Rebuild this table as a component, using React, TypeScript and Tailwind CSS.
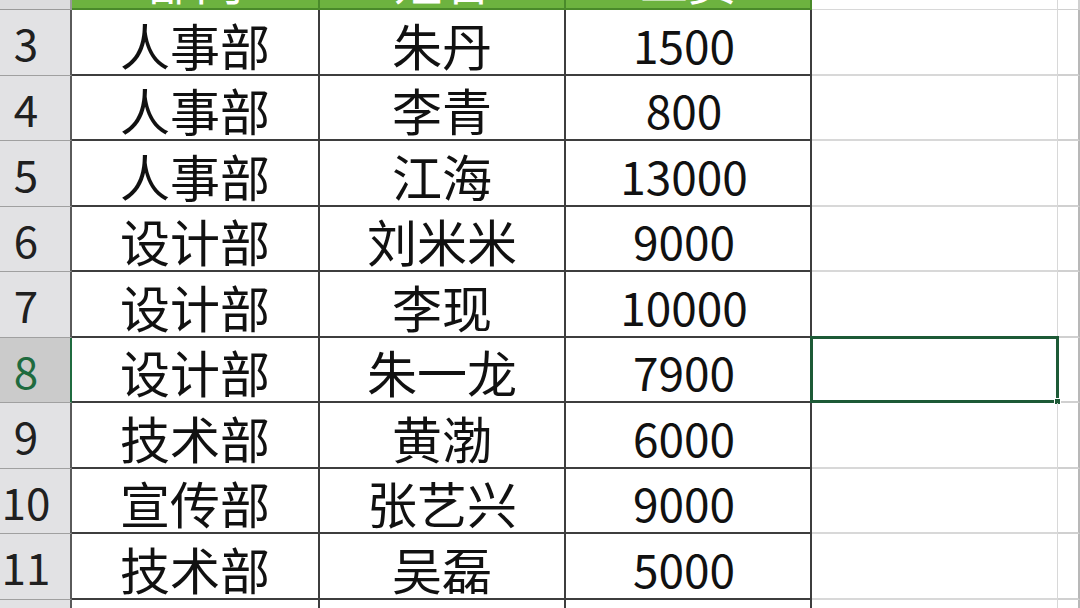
const rows = [
  { n: 3, dept: "人事部", name: "朱丹", pay: "1500" },
  { n: 4, dept: "人事部", name: "李青", pay: "800" },
  { n: 5, dept: "人事部", name: "江海", pay: "13000" },
  { n: 6, dept: "设计部", name: "刘米米", pay: "9000" },
  { n: 7, dept: "设计部", name: "李现", pay: "10000" },
  { n: 8, dept: "设计部", name: "朱一龙", pay: "7900" },
  { n: 9, dept: "技术部", name: "黄渤", pay: "6000" },
  { n: 10, dept: "宣传部", name: "张艺兴", pay: "9000" },
  { n: 11, dept: "技术部", name: "吴磊", pay: "5000" },
]

const font = { fontFamily: '"Noto Sans CJK SC", "Noto Sans", sans-serif' }

const cols = "grid grid-cols-[72px_248px_246px_246px_246px_22px]"

export default function App() {
  return (
    <div className="w-[1080px] h-[608px] overflow-hidden bg-white flex flex-col" style={font}>
      {/* header row, mostly scrolled away */}
      <div className={`${cols} h-[10px] shrink-0`}>
        <div className="bg-[#dcdcde] border-r-2 border-b border-[#9a9a9a]" />
        {["部门", "姓名", "工资"].map((h) => (
          <div
            key={h}
            className="bg-[#6db33f] border-r-2 border-b-2 border-[#4a8a2a] overflow-hidden flex justify-center items-start"
          >
            <span className="block h-[10px] mt-[-26px] text-white text-[48px] leading-[10px]">{h}</span>
          </div>
        ))}
        <div className="border-r border-b border-[#d8d8d8]" />
        <div className="border-r-2 border-b border-[#d0d0d0]" />
      </div>

      {rows.map((r) => {
        const sel = r.n === 8
        return (
          <div key={r.n} className={`${cols} h-[65.5px] shrink-0`}>
            <div
              className={`flex items-center border-b border-[#a0a0a0] border-r-2 ${
                sel ? "bg-[#cbcbcb] border-r-[#1f6b3f] text-[#1f6b3f]" : "bg-[#e2e2e4] border-r-[#5a5a5a] text-[#202020]"
              }`}
            >
              <span className="w-[52px] text-center text-[44px] leading-none">{r.n}</span>
            </div>
            <div className="flex items-center justify-center border-r-2 border-b-2 border-[#3e3e3e] text-[50px] text-[#111] leading-none pt-[4px]">
              {r.dept}
            </div>
            <div className="flex items-center justify-center border-r-2 border-b-2 border-[#3e3e3e] text-[50px] text-[#111] leading-none pt-[4px]">
              {r.name}
            </div>
            <div className="flex items-center justify-center border-r-2 border-b-2 border-[#3e3e3e] text-[46px] text-[#111] leading-none pt-[4px] pr-[8px]">
              {r.pay}
            </div>
            <div className="relative border-r border-b-2 border-[#d8d8d8]">
              {sel && (
                <div className="absolute left-[-2px] top-[-2px] right-[-2px] bottom-[-2px] border-[3px] border-[#1d5a36]">
                  <div className="absolute right-[-5px] bottom-[-5px] w-[7px] h-[7px] bg-[#1d5a36] border border-white" />
                </div>
              )}
            </div>
            <div className="border-r-2 border-b-2 border-[#d0d0d0] border-r-[#b8b8b8]" />
          </div>
        )
      })}

      {/* row 12, mostly cut off */}
      <div className={`${cols} flex-1`}>
        <div className="bg-[#e2e2e4] border-r-2 border-[#5a5a5a]" />
        <div className="border-r-2 border-[#3e3e3e]" />
        <div className="border-r-2 border-[#3e3e3e]" />
        <div className="border-r-2 border-[#3e3e3e]" />
        <div className="border-r border-[#d8d8d8]" />
        <div className="border-r-2 border-[#b8b8b8]" />
      </div>
    </div>
  )
}
